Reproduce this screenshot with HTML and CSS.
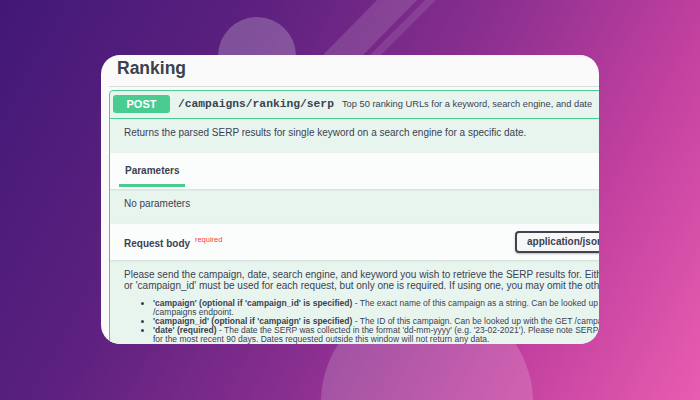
FILE: index.html
```html
<!DOCTYPE html>
<html lang="en">
<head>
    <meta charset="UTF-8">
    <meta name="viewport" content="width=device-width, initial-scale=1.0">
    <title>Ranking</title>
    <link rel="stylesheet" href="styles.css">
</head>
<body>

    <!-- Background shapes -->
    <svg class="backdrop" width="700" height="400" viewBox="0 0 700 400">
        <circle cx="257" cy="56" r="39" fill="rgba(255,255,255,0.22)"/>
        <polygon points="377,0 417,0 250,170 210,170" fill="rgba(255,255,255,0.13)"/>
        <polygon points="425,0 436,0 266,170 255,170" fill="rgba(255,255,255,0.1)"/>
        <circle cx="427" cy="402" r="106" fill="rgba(255,255,255,0.17)"/>
    </svg>

    <!-- Card with the swagger section -->
    <div class="card">
        <h2 class="tag-title">Ranking</h2>

        <div class="opblock">
            <div class="opblock-summary">
                <span class="method">POST</span>
                <span class="path">/campaigns/ranking/serp</span>
                <span class="summary-text">Top 50 ranking URLs for a keyword, search engine, and date</span>
            </div>

            <div class="opblock-description">
                Returns the parsed SERP results for single keyword on a search engine for a specific date.
            </div>

            <div class="section-header">
                <div class="tab">Parameters</div>
            </div>
            <div class="section-body">No parameters</div>

            <div class="section-header request-header">
                <div class="request-title">Request body <span class="required">required</span></div>
                <div class="content-type">application/json</div>
            </div>

            <div class="request-body">
                <p>Please send the campaign, date, search engine, and keyword you wish to retrieve the SERP results for. Either 'campaign'<br>or 'campaign_id' must be used for each request, but only one is required. If using one, you may omit the other.</p>
                <ul>
                    <li><strong>'campaign' (optional if 'campaign_id' is specified)</strong> - The exact name of this campaign as a string. Can be looked up with the GET<br>/campaigns endpoint.</li>
                    <li><strong>'campaign_id' (optional if 'campaign' is specified)</strong> - The ID of this campaign. Can be looked up with the GET /campaigns endpoint.</li>
                    <li><strong>'date' (required)</strong> - The date the SERP was collected in the format 'dd-mm-yyyy' (e.g. '23-02-2021'). Please note SERP data is only available<br>for the most recent 90 days. Dates requested outside this window will not return any data.</li>
                </ul>
            </div>
        </div>
    </div>

</body>
</html>
```

FILE: styles.css
```css
body, html {
    margin: 0;
    padding: 0;
    height: 100%;
    overflow: hidden;
}

body {
    position: relative;
    box-sizing: border-box;
    padding: 55px 101px 0;
    background: linear-gradient(118deg, #411877 0%, #5e217f 30%, #8a2f90 55%, #c2409f 78%, #e85db0 100%);
    font-family: 'Liberation Sans', Arial, sans-serif;
    color: #3b4151;
}

/* Background shapes */
.backdrop {
    position: absolute;
    top: 0;
    left: 0;
}

/* Card */
.card {
    position: relative;
    height: 289px;
    padding-left: 8px;
    border-radius: 19px;
    background: #fafafa;
    overflow: hidden;
}

.tag-title {
    margin: 0;
    padding: 2px 0 7px 8px;
    font-size: 17.5px;
    line-height: 22px;
    font-weight: bold;
    border-bottom: 1px solid #dcdde0;
}

/* Operation block */
.opblock {
    width: 540px;
    margin-top: 3px;
    border: 1px solid #49cc90;
    border-radius: 4px;
    background: #e8f5ef;
    white-space: nowrap;
}

.opblock-summary {
    display: flex;
    align-items: center;
    padding: 4px 3px 5px;
    border-bottom: 1px solid #49cc90;
}

.method {
    width: 57px;
    height: 18px;
    line-height: 18px;
    border-radius: 3px;
    background: #49cc90;
    color: #fff;
    font-size: 11px;
    font-weight: bold;
    text-align: center;
}

.path {
    margin-left: 8px;
    font-family: 'Liberation Mono', 'Courier New', monospace;
    font-size: 11.3px;
    font-weight: bold;
}

.summary-text {
    margin-left: 8px;
    font-size: 9.3px;
}

.opblock-description {
    padding: 8px 14px 14px;
    font-size: 10px;
    line-height: 12px;
}

.section-header {
    height: 36px;
    padding-left: 9px;
    background: #fbfdfc;
    box-shadow: 0 1px 2px rgba(0, 0, 0, 0.1);
}

.tab {
    display: inline-block;
    padding: 12px 6px 7px;
    font-size: 10px;
    line-height: 12px;
    font-weight: bold;
    border-bottom: 3px solid #49cc90;
}

.section-body {
    padding: 9px 14px 14px;
    font-size: 10px;
    line-height: 12px;
}

.request-header {
    display: flex;
    align-items: center;
    justify-content: space-between;
    padding: 0 14px;
}

.request-title {
    font-size: 10px;
    font-weight: bold;
}

.required {
    margin-left: 2px;
    color: #f93e3e;
    font-size: 7.5px;
    font-weight: normal;
    vertical-align: 5px;
}

.content-type {
    width: 121px;
    height: 22px;
    box-sizing: border-box;
    padding-left: 10px;
    border: 2px solid #41444e;
    border-radius: 4px;
    background: #f7f7f7;
    box-shadow: 0 1px 2px rgba(0, 0, 0, 0.25);
    font-size: 10px;
    font-weight: bold;
    line-height: 18px;
}

.request-body {
    padding: 9px 14px 0;
}

.request-body p {
    margin: 0 0 8px;
    font-size: 10px;
    line-height: 11px;
}

.request-body ul {
    margin: 0;
    padding-left: 29px;
    font-size: 8.5px;
    line-height: 9px;
}
```
